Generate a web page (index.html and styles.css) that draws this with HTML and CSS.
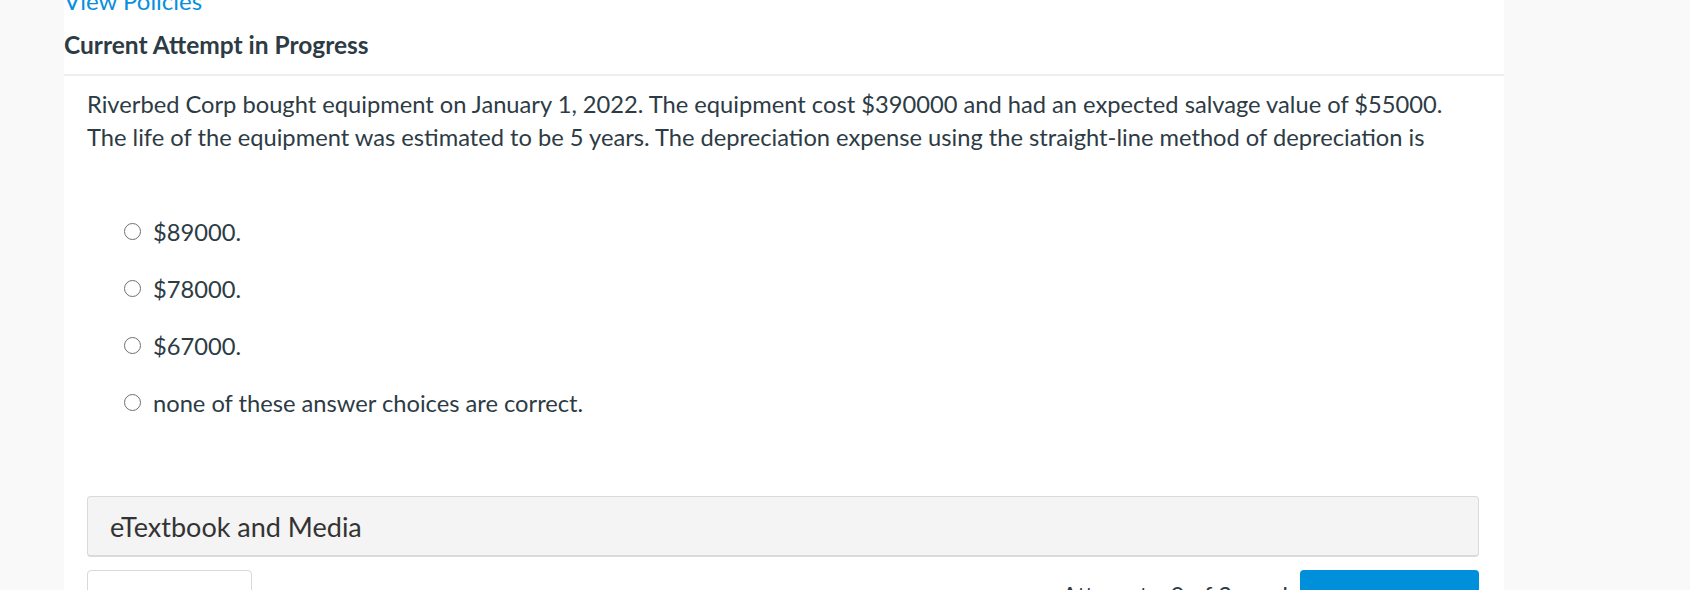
FILE: index.html
```html
<!DOCTYPE html>
<html lang="en">
<head>
<meta charset="utf-8">
<title>Current Attempt in Progress</title>
<link rel="stylesheet" href="styles.css">
</head>
<body>
<div class="panel">
  <a class="policies" href="#">View Policies</a>
  <h2 class="heading">Current Attempt in Progress</h2>
  <div class="content">
    <p class="question">Riverbed Corp bought equipment on January 1, 2022. The equipment cost $390000 and had an expected salvage value of $55000. The life of the equipment was estimated to be 5 years. The depreciation expense using the straight-line method of depreciation is</p>
    <ul class="options">
      <li class="option"><span class="radio"></span><span>$89000.</span></li>
      <li class="option"><span class="radio"></span><span>$78000.</span></li>
      <li class="option"><span class="radio"></span><span>$67000.</span></li>
      <li class="option"><span class="radio"></span><span>none of these answer choices are correct.</span></li>
    </ul>
    <div class="media">eTextbook and Media</div>
    <div class="actions">
      <button class="btn-secondary" type="button"></button>
      <div class="actions-right">
        <span class="attempts">Attempts: 0 of 3 used</span>
        <button class="btn-primary" type="button">Submit Answer</button>
      </div>
    </div>
  </div>
</div>
</body>
</html>
```
FILE: styles.css
```css
html, body {
  margin: 0;
  padding: 0;
}
body {
  background: #f9f9f9;
  font-family: Lato, "Open Sans", sans-serif;
  color: #2d3b45;
  overflow: hidden;
}
.panel {
  width: 1440px;
  margin-left: 64px;
  margin-top: -11px;
  background: #fff;
  min-height: 700px;
}
.policies {
  display: block;
  font-size: 24px;
  line-height: 24px;
  color: #0a8fdc;
  text-decoration: none;
}
.heading {
  margin: 17px 0 0;
  font-size: 24.5px;
  line-height: 29px;
  font-weight: 700;
  padding-bottom: 15px;
  border-bottom: 2px solid #eeeeee;
}
.content {
  padding: 12px 25px 0 23px;
}
.question {
  margin: 0;
  padding-right: 8px;
  font-size: 23.7px;
  line-height: 33px;
  color: #2d3b45;
}
.options {
  list-style: none;
  margin: 49px 0 0;
  padding: 0 0 0 37px;
}
.option {
  display: flex;
  align-items: center;
  gap: 12px;
  height: 57px;
  font-size: 23.7px;
}
.radio {
  width: 15px;
  height: 15px;
  border: 1.6px solid #6f6f6f;
  border-radius: 50%;
  flex: none;
}
.media {
  margin-top: 65px;
  height: 61px;
  box-sizing: border-box;
  display: flex;
  align-items: center;
  padding-left: 22px;
  background: #f4f4f4;
  border: 1px solid #dadada;
  border-bottom-width: 2px;
  border-radius: 4px;
  font-size: 27px;
  color: #333;
}
.actions {
  margin-top: 13px;
  display: flex;
  justify-content: space-between;
  align-items: flex-start;
}
.btn-secondary {
  width: 165px;
  height: 60px;
  background: #fff;
  border: 1px solid #d9d9d9;
  border-radius: 4px;
}
.actions-right {
  display: flex;
  align-items: flex-start;
  gap: 12px;
}
.attempts {
  font-size: 24px;
  line-height: 24px;
  margin-top: 13px;
  color: #2d3b45;
}
.btn-primary {
  width: 179px;
  height: 64px;
  background: #008fdb;
  border: none;
  border-radius: 4px;
  color: #fff;
  font-family: Lato, sans-serif;
  font-size: 24px;
}
```
